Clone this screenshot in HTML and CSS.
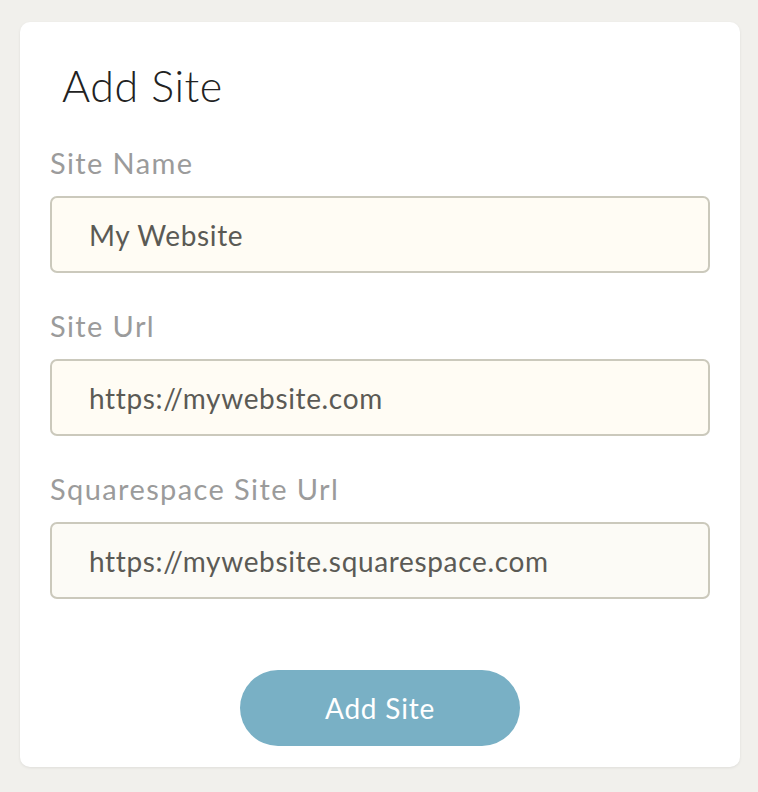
FILE: index.html
```html
<!DOCTYPE html>
<html>
<head>
<meta charset="utf-8">
<link rel="stylesheet" href="styles.css">
</head>
<body>
<div class="card">
  <h1 class="title">Add Site</h1>
  <form class="form">
    <div class="field">
      <label class="label">Site Name</label>
      <input class="input" type="text" value="My Website">
    </div>
    <div class="field">
      <label class="label">Site Url</label>
      <input class="input" type="text" value="https://mywebsite.com">
    </div>
    <div class="field">
      <label class="label">Squarespace Site Url</label>
      <input class="input input-alt" type="text" value="https://mywebsite.squarespace.com">
    </div>
    <div class="actions">
      <button class="button" type="button">Add Site</button>
    </div>
  </form>
</div>
</body>
</html>
```
FILE: styles.css
```css
html, body {
  margin: 0;
  padding: 0;
}
body {
  background: #f1f0ec;
  font-family: "Lato", "Open Sans", sans-serif;
  width: 758px;
  height: 792px;
  overflow: hidden;
}
.card {
  margin: 22px 0 0 20px;
  width: 720px;
  height: 745px;
  box-sizing: border-box;
  background: #ffffff;
  border-radius: 10px;
  box-shadow: 0 1px 3px rgba(0,0,0,0.08);
  padding: 39px 30px 20px;
}
.title {
  margin: 0 0 34px 12px;
  font-size: 43px;
  line-height: 50px;
  font-weight: 300;
  letter-spacing: 0.6px;
  color: #222222;
}
.form {
  display: flex;
  flex-direction: column;
}
.field {
  display: flex;
  flex-direction: column;
  margin-bottom: 35px;
}
.label {
  font-size: 29px;
  line-height: 36px;
  letter-spacing: 1.4px;
  color: #9b9b9b;
  margin-bottom: 15px;
}
.input {
  height: 77px;
  box-sizing: border-box;
  border: 2px solid #cbc9bc;
  border-radius: 7px;
  background: #fffcf4;
  padding: 0 0 0 37px;
  font-family: "Lato", "Open Sans", sans-serif;
  font-size: 28px;
  letter-spacing: 0.65px;
  color: #5b5a55;
  outline: none;
}
.input-alt {
  background: #fcfbf6;
}
.actions {
  display: flex;
  justify-content: center;
  margin-top: 36px;
}
.button {
  width: 280px;
  height: 76px;
  border: none;
  border-radius: 38px;
  background: #79b0c5;
  color: #ffffff;
  font-family: "Lato", "Open Sans", sans-serif;
  font-size: 28px;
  letter-spacing: 0.8px;
  cursor: pointer;
}
```
